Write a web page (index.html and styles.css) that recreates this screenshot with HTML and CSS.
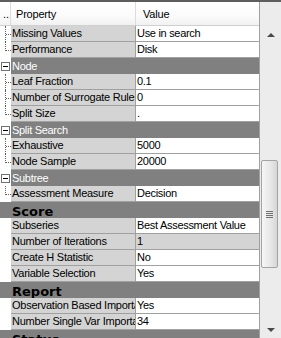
FILE: index.html
```html
<!DOCTYPE html>
<html>
<head>
<meta charset="utf-8">
<link rel="stylesheet" href="styles.css">
</head>
<body>
<div class="frame">
  <div class="grid">
    <div class="header">
      <div class="hgut"><span class="dots">..</span></div>
      <div class="hprop">Property</div>
      <div class="hval">Value</div>
    </div>
    <div class="rows">
      <div class="row"><div class="gut mid"></div><div class="prop">Missing Values</div><div class="val">Use in search</div></div>
      <div class="row"><div class="gut last"></div><div class="prop">Performance</div><div class="val">Disk</div></div>
      <div class="row grp"><div class="gut box"><span class="minus"></span></div><div class="gname">Node</div></div>
      <div class="row"><div class="gut mid"></div><div class="prop">Leaf Fraction</div><div class="val">0.1</div></div>
      <div class="row"><div class="gut mid"></div><div class="prop">Number of Surrogate Rules</div><div class="val">0</div></div>
      <div class="row"><div class="gut last"></div><div class="prop">Split Size</div><div class="val">.</div></div>
      <div class="row grp"><div class="gut box"><span class="minus"></span></div><div class="gname">Split Search</div></div>
      <div class="row"><div class="gut mid"></div><div class="prop">Exhaustive</div><div class="val">5000</div></div>
      <div class="row"><div class="gut last"></div><div class="prop">Node Sample</div><div class="val">20000</div></div>
      <div class="row grp"><div class="gut box"><span class="minus"></span></div><div class="gname">Subtree</div></div>
      <div class="row"><div class="gut last"></div><div class="prop">Assessment Measure</div><div class="val">Decision</div></div>
      <div class="row cat"><div class="cname">Score</div></div>
      <div class="row"><div class="gut"></div><div class="prop">Subseries</div><div class="val">Best Assessment Value</div></div>
      <div class="row"><div class="gut"></div><div class="prop">Number of Iterations</div><div class="val sel">1</div></div>
      <div class="row"><div class="gut"></div><div class="prop">Create H Statistic</div><div class="val">No</div></div>
      <div class="row"><div class="gut"></div><div class="prop">Variable Selection</div><div class="val">Yes</div></div>
      <div class="row cat"><div class="cname">Report</div></div>
      <div class="row"><div class="gut"></div><div class="prop">Observation Based Importance</div><div class="val">Yes</div></div>
      <div class="row"><div class="gut"></div><div class="prop">Number Single Var Importance</div><div class="val">34</div></div>
      <div class="row cat"><div class="cname">Status</div></div>
    </div>
  </div>
  <div class="sbar">
    <div class="shead"></div>
    <div class="sbtn"><span class="up"></span></div>
    <div class="track">
      <div class="thumb"><span class="grip"></span><span class="grip"></span><span class="grip"></span><span class="grip"></span></div>
    </div>
    <div class="sbtn"><span class="down"></span></div>
  </div>
</div>
</body>
</html>
```
FILE: styles.css
```css
html, body {
  margin: 0;
  padding: 0;
  background: #ffffff;
  overflow: hidden;
}
body {
  width: 281px;
  height: 338px;
  font-family: "Liberation Sans", Arial, sans-serif;
  font-size: 11px;
  color: #000;
}
.frame {
  display: flex;
  border-top: 2px solid #5e5e5e;
  height: 336px;
  overflow: hidden;
}
.grid {
  width: 259px;
  border-right: 1px solid #a0a0a0;
  display: flex;
  flex-direction: column;
}
.header {
  display: flex;
  height: 23px;
  border-bottom: 1px solid #d0d0d0;
  background: linear-gradient(#ffffff, #fbfbfb 60%, #f1f1f1);
}
.hgut {
  width: 10px;
  border-right: 1px solid #dcdcdc;
  position: relative;
}
.dots {
  position: absolute;
  left: 3px;
  top: 6px;
  color: #000;
}
.hprop {
  width: 119px;
  padding-left: 5px;
  border-right: 1px solid #dcdcdc;
  line-height: 23px;
  padding-top: 1px;
  letter-spacing: -0.2px;
}
.hval {
  flex: 1;
  padding-left: 7px;
  line-height: 23px;
  padding-top: 1px;
  letter-spacing: -0.2px;
}
.rows {
  display: flex;
  flex-direction: column;
}
.row {
  display: flex;
  height: 16px;
  flex: none;
}
.gut {
  width: 11px;
  height: 16px;
  flex: none;
  position: relative;
  background: #fff;
}
.gut.mid::before {
  content: "";
  position: absolute;
  left: 5px;
  top: 0;
  height: 16px;
  border-left: 1px dotted #606060;
}
.gut.mid::after, .gut.last::after {
  content: "";
  position: absolute;
  left: 6px;
  top: 8px;
  width: 5px;
  border-top: 1px dotted #606060;
}
.gut.last::before {
  content: "";
  position: absolute;
  left: 5px;
  top: 0;
  height: 9px;
  border-left: 1px dotted #606060;
}
.gut.box {
  display: flex;
  align-items: center;
  justify-content: center;
}
.minus {
  width: 7px;
  height: 7px;
  border: 1px solid #707070;
  background: #fff;
  margin-left: -1px;
  position: relative;
}
.minus::after {
  content: "";
  position: absolute;
  left: 1px;
  top: 3px;
  width: 5px;
  height: 1px;
  background: #000;
}
.prop {
  flex: none;
  background: #d4d4d4;
  border-right: 1px solid #a0a0a0;
  border-bottom: 1px solid #a0a0a0;
  box-sizing: border-box;
  width: 125px;
  padding-left: 1px;
  line-height: 15px;
  white-space: nowrap;
  overflow: hidden;
  letter-spacing: -0.25px;
}
.val {
  flex: 1;
  background: #fff;
  border-bottom: 1px solid #a0a0a0;
  line-height: 15px;
  white-space: nowrap;
  overflow: hidden;
  padding-left: 1px;
  letter-spacing: -0.3px;
}
.val.sel {
  background: #d4d4d4;
}
.grp .gname {
  flex: 1;
  background: #808080;
  color: #ffffff;
  line-height: 16px;
  padding-left: 1px;
  letter-spacing: -0.3px;
}
.cat {
  background: #808080;
}
.cname {
  font-family: "DejaVu Sans", Verdana, sans-serif;
  font-weight: bold;
  font-size: 13px;
  line-height: 16px;
  padding-left: 12px;
  color: #000;
  margin-top: 2px;
}
.sbar {
  width: 21px;
  background: #ececec;
  display: flex;
  flex-direction: column;
}
.shead {
  height: 24px;
}
.sbtn {
  height: 18px;
  display: flex;
  align-items: center;
  justify-content: center;
}
.up {
  width: 0;
  height: 0;
  border-left: 4px solid transparent;
  border-right: 4px solid transparent;
  border-bottom: 4px solid #4a4a4a;
}
.down {
  width: 0;
  height: 0;
  border-left: 4px solid transparent;
  border-right: 4px solid transparent;
  border-top: 4px solid #4a4a4a;
  margin-top: 2px;
}
.track {
  flex: 1;
  padding-top: 116px;
}
.thumb {
  margin-left: 1px;
  width: 15px;
  height: 106px;
  border: 1px solid #a4a4a4;
  border-radius: 2px;
  background: linear-gradient(90deg, #f6f6f6, #e6e6e6 60%, #d6d6d6);
  display: flex;
  flex-direction: column;
  align-items: center;
  justify-content: center;
  gap: 1px;
}
.grip {
  width: 7px;
  height: 1px;
  background: #707070;
}
```
